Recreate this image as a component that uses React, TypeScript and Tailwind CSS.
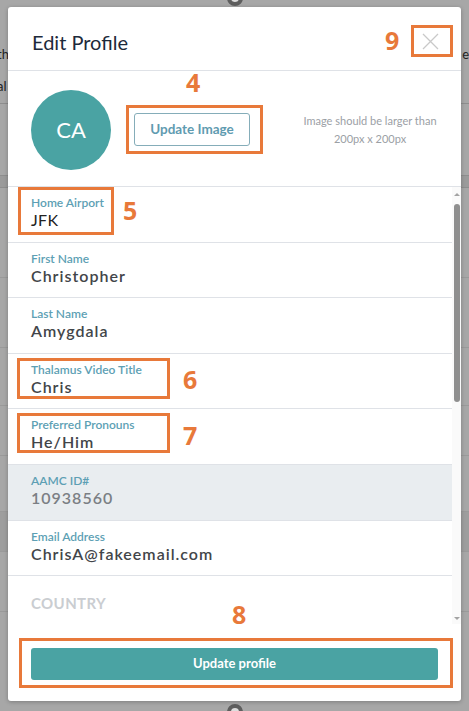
import React from 'react';

const font = { fontFamily: 'Lato, "Open Sans", Arial, sans-serif' };

interface FieldProps {
  label: string;
  value: string;
  muted?: boolean;
  plain?: boolean;
}

function Field({ label, value, muted, plain }: FieldProps) {
  return (
    <div className={`h-[55.6px] shrink-0 border-b border-[#dfe2e7] px-[23px] pt-[9px] ${muted ? 'bg-[#e9edf0]' : 'bg-white'}`}>
      <div className="text-[12px] leading-[14px] font-semibold text-[#5d9fb4]">{label}</div>
      <div
        className={`text-[16px] leading-[20px] ${plain ? 'font-normal text-[#222] tracking-[0.3px]' : 'font-semibold tracking-[1px]'} ${muted ? 'text-[#7b7f84]' : plain ? '' : 'text-[#424549]'}`}
      >
        {value}
      </div>
    </div>
  );
}

function Mark({ n, className }: { n: string; className: string }) {
  return (
    <span className={`absolute text-[25px] leading-none font-bold text-[#e8793a] ${className}`} style={{ fontFamily: '"Open Sans", Arial, sans-serif' }}>
      {n}
    </span>
  );
}

function Box({ className }: { className: string }) {
  return <div className={`absolute border-[3px] border-[#e8793a] pointer-events-none ${className}`} />;
}

export default function App() {
  return (
    <div className="relative h-[711px] w-[469px] overflow-hidden bg-[#a7a7a7]" style={font}>
      {/* backdrop page */}
      <div className="flex flex-col text-[13px] text-[#222]">
        <div className="h-[40px]" />
        <div className="flex justify-between h-[30px] items-center"><span className="-ml-[3px]">th</span><span>e</span></div>
        <div className="flex h-[34px] items-center border-b border-[#8e8e8e]"><span className="-ml-[3px]">al</span></div>
        <div className="h-[72px] border-b border-[#8e8e8e]" />
        <div className="h-[12px] bg-[#9b9b9b] border-b border-[#8e8e8e]" />
        <div className="h-[90px] border-b border-[#9a9a9a]" />
        <div className="h-[70px] border-b border-[#9a9a9a]" />
        <div className="h-[58px] border-b border-[#9a9a9a]" />
        <div className="h-[50px] border-b border-[#9a9a9a]" />
        <div className="h-[56px] border-b border-[#9a9a9a]" />
        <div className="h-[40px] bg-[#9e9e9e] border-b border-[#9a9a9a]" />
        <div className="h-[60px] border-b border-[#9a9a9a]" />
      </div>
      <div className="absolute left-[227px] -top-[10px] h-[16px] w-[16px] rounded-full border-[4px] border-[#5e5e5e] bg-[#ddd]" />
      <div className="absolute left-[227px] top-[704px] h-[16px] w-[16px] rounded-full border-[4px] border-[#5e5e5e] bg-[#ddd]" />

      {/* modal */}
      <div className="absolute left-[8px] top-[7px] flex h-[694px] w-[453px] flex-col overflow-hidden rounded-[3px] bg-white shadow-[0_1px_4px_rgba(0,0,0,0.25)]">
        <div className="flex h-[64px] shrink-0 items-center justify-between border-b border-[#dfe2e7] pl-[24px] pr-[22px]">
          <h1 className="text-[20px] leading-none text-[#1d2a3b]" style={{ marginTop: '6px' }}>Edit Profile</h1>
          <svg width="17" height="17" viewBox="0 0 17 17" className="mt-[6px]">
            <path d="M1 1 L16 16 M16 1 L1 16" stroke="#c9c9c9" strokeWidth="1.3" />
          </svg>
        </div>

        <div className="flex h-[116px] shrink-0 items-center border-b border-[#dfe2e7] pl-[23px] pt-[2px]">
          <div className="flex h-[80px] w-[80px] items-center justify-center rounded-full bg-[#4aa3a3] text-[22px] text-white">CA</div>
          <button className="ml-[23px] h-[33px] w-[116px] rounded-[3px] border border-[#85adb9] text-[13.5px] font-bold text-[#5f9bb0]">
            Update Image
          </button>
          <div className="ml-[29px] flex-1 text-center text-[11px] leading-[18px] text-[#9ba0a5]">
            Image should be larger than
            <br />
            200px x 200px
          </div>
        </div>

        <div className="flex min-h-0 flex-1">
          <div className="flex min-w-0 flex-1 flex-col overflow-hidden">
            <Field label="Home Airport" value="JFK" plain />
            <Field label="First Name" value="Christopher" />
            <Field label="Last Name" value="Amygdala" />
            <Field label="Thalamus Video Title" value="Chris" />
            <Field label="Preferred Pronouns" value="He/Him" />
            <Field label="AAMC ID#" value="10938560" muted />
            <Field label="Email Address" value="ChrisA@fakeemail.com" />
            <div className="px-[23px] pt-[16px] text-[15px] font-bold tracking-[0.4px] text-[#cacdd1]">COUNTRY</div>
          </div>
          <div className="flex w-[9px] shrink-0 flex-col items-center bg-[#fafafa] pt-[6px] pb-[4px]">
            <div className="h-0 w-0 border-x-[3px] border-b-[3px] border-x-transparent border-b-[#a3a3a3]" />
            <div className="mt-[8px] h-[198px] w-[6px] rounded-full bg-[#8f8f8f]" />
            <div className="flex-1" />
            <div className="h-0 w-0 border-x-[3px] border-t-[3px] border-x-transparent border-t-[#a3a3a3]" />
          </div>
        </div>

        <div className="shrink-0 px-[23px] pt-[24px] pb-[21px]">
          <button className="h-[32px] w-[407px] rounded-[3px] bg-[#4aa3a3] text-[13px] font-bold text-white">Update profile</button>
        </div>
      </div>

      {/* annotations */}
      <Box className="left-[411px] top-[25px] h-[32px] w-[42px]" />
      <Mark n="9" className="left-[385px] top-[28px]" />
      <Box className="left-[126px] top-[105px] h-[49px] w-[137px]" />
      <Mark n="4" className="left-[186px] top-[70px]" />
      <Box className="left-[18px] top-[187px] h-[48px] w-[96px]" />
      <Mark n="5" className="left-[123px] top-[198px]" />
      <Box className="left-[17px] top-[358px] h-[41px] w-[153px]" />
      <Mark n="6" className="left-[183px] top-[367px]" />
      <Box className="left-[17px] top-[413px] h-[40px] w-[153px]" />
      <Mark n="7" className="left-[183px] top-[423px]" />
      <Box className="left-[19px] top-[638px] h-[50px] w-[434px]" />
      <Mark n="8" className="left-[232px] top-[602px]" />
    </div>
  );
}
